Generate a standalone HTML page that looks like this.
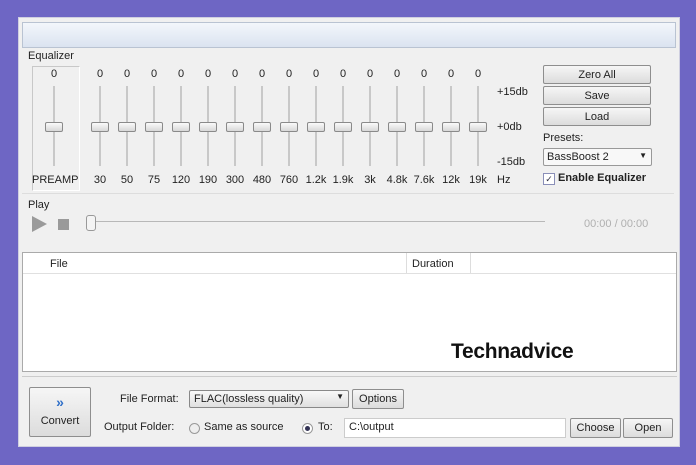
<html><head><style>
body{margin:0;width:696px;height:465px;background:#6e66c4;position:relative;font-family:"Liberation Sans",sans-serif;font-size:11px;color:#222;overflow:hidden}
.a{position:absolute}
.win{left:18px;top:17px;width:660px;height:428px;background:#f0f0f0;border:1px solid #cfcfe0}
.btn{position:absolute;background:linear-gradient(#f6f6f6,#dcdcdc);border:1px solid #8e8e8e;border-radius:2px;text-align:center;font-size:11px;box-sizing:border-box}
.tr{position:absolute;width:2px;background:#c8c8c8;top:86px;height:80px}
.hd{position:absolute;width:16px;height:8px;top:122px;border:1px solid #8a8a8a;border-radius:2px;background:linear-gradient(#fafafa,#d8d8d8)}
.v{position:absolute;top:68px;width:30px;text-align:center}
.l{position:absolute;top:174px;width:34px;text-align:center}
</style></head><body>
<div class="a win"></div>
<div class="a" style="left:22px;top:22px;width:652px;height:24px;border:1px solid #b9c3d2;background:linear-gradient(#f3f6fb,#dbe3f0)"></div>
<div class="a" style="left:28px;top:50px">Equalizer</div>
<div class="a" style="left:32px;top:66px;width:46px;height:123px;border:1px solid #c8c8c8;border-right-color:#fff;border-bottom-color:#fff"></div>
<div class="a" style="left:22px;top:193px;width:652px;height:1px;background:#ddd"></div>
<div class="a" style="left:28px;top:199px">Play</div>
<svg class="a" style="left:31px;top:215px" width="42" height="18"><path d="M1 1 L16 9 L1 17Z" fill="#9a9a9a"/><rect x="27" y="4" width="11" height="11" fill="#9a9a9a"/></svg>
<div class="a" style="left:92px;top:221px;width:453px;height:1px;background:#b8b8b8"></div>
<div class="a" style="left:86px;top:215px;width:8px;height:14px;border:1px solid #999;border-radius:3px;background:#f4f4f4"></div>
<div class="a" style="left:584px;top:218px;color:#b0b0b0">00:00 / 00:00</div>
<div class="a" style="left:22px;top:252px;width:655px;height:120px;background:#fff;border:1px solid #aaa;box-sizing:border-box"></div>
<div class="a" style="left:23px;top:253px;width:653px;height:20px;border-bottom:1px solid #e0e0e0"></div>
<div class="a" style="left:50px;top:258px">File</div>
<div class="a" style="left:406px;top:253px;width:1px;height:20px;background:#ddd"></div>
<div class="a" style="left:412px;top:258px">Duration</div>
<div class="a" style="left:470px;top:253px;width:1px;height:20px;background:#ddd"></div>
<div class="a" style="left:451px;top:340px;font-size:21px;font-weight:bold;color:#111;letter-spacing:-0.3px">Technadvice</div>
<div class="a" style="left:22px;top:376px;width:655px;height:1px;background:#ccc"></div>
<div class="btn" style="left:29px;top:387px;width:62px;height:50px;padding-top:7px"><div style="color:#2f6fc8;font-weight:bold;font-size:14px;line-height:14px">»</div><div style="margin-top:6px">Convert</div></div>
<div class="a" style="left:120px;top:393px">File Format:</div>
<div class="a" style="left:189px;top:390px;width:160px;height:18px;border:1px solid #888;border-radius:2px;background:linear-gradient(#f8f8f8,#e0e0e0);box-sizing:border-box;padding:2px 4px">FLAC(lossless quality)<span style="position:absolute;right:4px;top:1px;font-size:8px">▼</span></div>
<div class="btn" style="left:352px;top:389px;width:52px;height:20px;padding-top:3px">Options</div>
<div class="a" style="left:104px;top:421px">Output Folder:</div>
<div class="a" style="left:189px;top:423px;width:9px;height:9px;border:1px solid #999;border-radius:50%;background:#eee"></div>
<div class="a" style="left:204px;top:421px">Same as source</div>
<div class="a" style="left:302px;top:423px;width:9px;height:9px;border:1px solid #999;border-radius:50%;background:#fff"><div style="margin:2px;width:5px;height:5px;border-radius:50%;background:#335"></div></div>
<div class="a" style="left:318px;top:421px">To:</div>
<div class="a" style="left:344px;top:418px;width:222px;height:20px;background:#fff;border:1px solid #ccc;box-sizing:border-box;padding:2px 4px">C:\output</div>
<div class="btn" style="left:570px;top:418px;width:51px;height:20px;padding-top:3px">Choose</div>
<div class="btn" style="left:623px;top:418px;width:50px;height:20px;padding-top:3px">Open</div>
<div class="btn" style="left:543px;top:65px;width:108px;height:19px;padding-top:3px">Zero All</div>
<div class="btn" style="left:543px;top:86px;width:108px;height:19px;padding-top:3px">Save</div>
<div class="btn" style="left:543px;top:107px;width:108px;height:19px;padding-top:3px">Load</div>
<div class="a" style="left:543px;top:132px">Presets:</div>
<div class="a" style="left:543px;top:148px;width:109px;height:18px;border:1px solid #999;border-radius:2px;background:#f8f8f8;box-sizing:border-box;padding:2px 3px">BassBoost 2<span style="position:absolute;right:4px;top:2px;font-size:8px">▼</span></div>
<div class="a" style="left:543px;top:173px;width:10px;height:10px;border:1px solid #8a8fb8;background:#fff;font-size:9px;line-height:10px;text-align:center;color:#334">✓</div>
<div class="a" style="left:558px;top:172px;font-weight:bold">Enable Equalizer</div>
<div class="a" style="left:497px;top:86px">+15db</div>
<div class="a" style="left:497px;top:121px">+0db</div>
<div class="a" style="left:497px;top:156px">-15db</div>
<div class="a" style="left:497px;top:174px">Hz</div>
<div id="eq"></div>
<script>
var xs=[54],labs=["PREAMP","30","50","75","120","190","300","480","760","1.2k","1.9k","3k","4.8k","7.6k","12k","19k"],h="";
for(var i=0;i<15;i++)xs.push(100+27*i);
xs.forEach(function(x,i){h+='<div class="v" style="left:'+(x-15)+'px">0</div><div class="tr" style="left:'+(x-1)+'px"></div><div class="hd" style="left:'+(x-9)+'px"></div><div class="l" style="left:'+(x-(i?17:22))+'px;width:'+(i?34:44)+'px">'+labs[i]+'</div>'});
document.getElementById('eq').innerHTML=h;
</script>
</body></html>
